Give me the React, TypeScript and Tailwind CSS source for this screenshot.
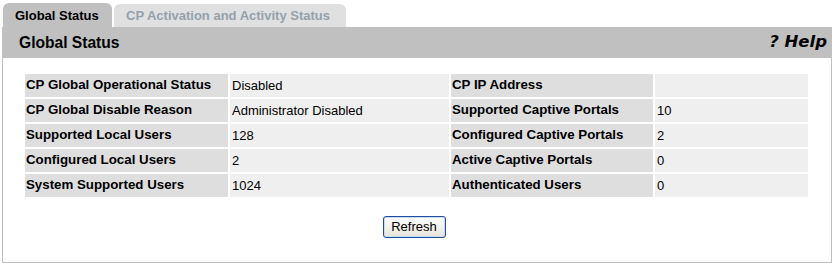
import React from "react";

const rows: [string, string, string, string][] = [
  ["CP Global Operational Status", "Disabled", "CP IP Address", ""],
  ["CP Global Disable Reason", "Administrator Disabled", "Supported Captive Portals", "10"],
  ["Supported Local Users", "128", "Configured Captive Portals", "2"],
  ["Configured Local Users", "2", "Active Captive Portals", "0"],
  ["System Supported Users", "1024", "Authenticated Users", "0"],
];

export default function App() {
  return (
    <div className="w-[834px] h-[266px] bg-white font-['Liberation_Sans',Arial,sans-serif] text-black">
      <div className="pl-[2px] pr-[2px] pt-[3px]">
        <div className="flex items-end h-[24px] pl-[1px]">
          <div className="h-[24px] w-[109px] bg-[#c0c0c0] rounded-t-[6px] flex items-center pl-[12px] text-[13px] font-bold pt-[1px]">
            Global Status
          </div>
          <div className="ml-[2px] h-[23px] w-[232px] bg-[#e0e0e0] rounded-t-[6px] flex items-center pl-[12px] text-[13px] font-bold text-[#95a0ab]">
            CP Activation and Activity Status
          </div>
        </div>
        <div className="h-[31px] bg-[#c0c0c0] flex items-center justify-between pl-[17px] pr-[5px]">
          <span className="text-[15.6px] font-bold">Global Status</span>
          <span className="text-[16.5px] font-bold italic font-['DejaVu_Sans',Verdana,sans-serif]">? Help</span>
        </div>
        <div className="h-[205px] w-[830px] border-l border-r border-b border-[#c0c0c0] flex flex-col items-start">
          <div className="mt-[16px] ml-[22px] grid grid-cols-[203px_219px_202px_153px] gap-[2px]">
            {rows.map((r, i) => (
              <React.Fragment key={i}>
                <div className="h-[23px] bg-[#dedede] flex items-center pl-[1px] pb-[2px] text-[13.3px] font-bold whitespace-nowrap">{r[0]}</div>
                <div className="h-[23px] bg-[#efefef] flex items-center pl-[2px] text-[13px] whitespace-nowrap">{r[1]}</div>
                <div className="h-[23px] bg-[#dedede] flex items-center pl-[1px] pb-[2px] text-[13.3px] font-bold whitespace-nowrap">{r[2]}</div>
                <div className="h-[23px] bg-[#efefef] flex items-center pl-[2px] text-[13px] whitespace-nowrap">{r[3]}</div>
              </React.Fragment>
            ))}
          </div>
          <div className="w-full flex justify-center mt-[19px] pr-[6px]">
            <button className="h-[22px] w-[63px] rounded-[3px] border border-[#1d4f9e] bg-gradient-to-b from-white to-[#e6e4da] text-[13px] shadow-[inset_0_0_0_1px_#c9dbf5]">
              Refresh
            </button>
          </div>
        </div>
      </div>
    </div>
  );
}
